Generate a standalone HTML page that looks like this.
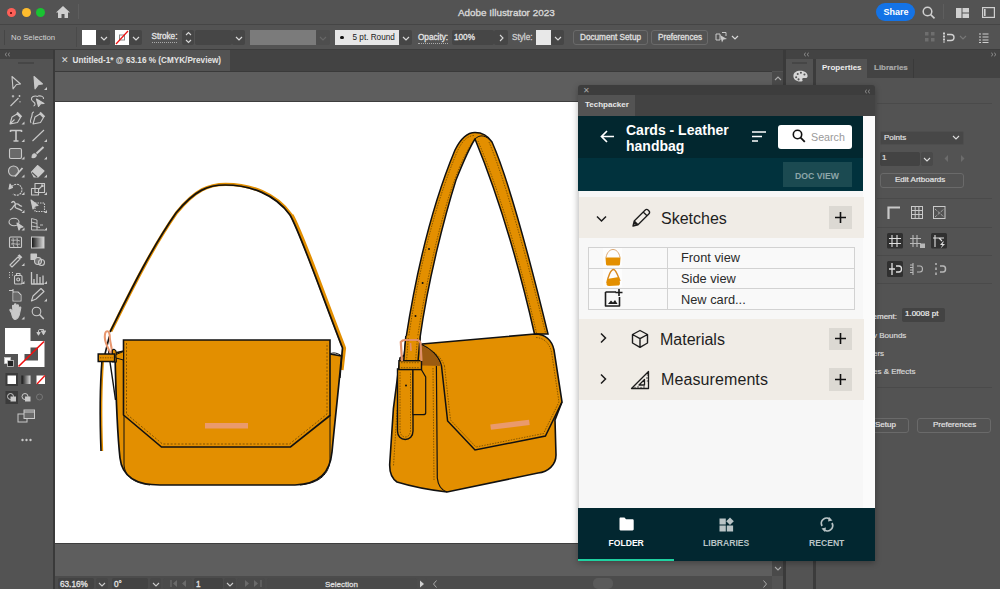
<!DOCTYPE html>
<html><head><meta charset="utf-8">
<style>
*{box-sizing:border-box;margin:0;padding:0}
html,body{width:1000px;height:589px;overflow:hidden}
body{background:#535353;position:relative;font-family:"Liberation Sans",sans-serif;color:#d6d6d6}
.a{position:absolute}
.t{position:absolute;white-space:nowrap;line-height:1}
.ui{-webkit-text-stroke:0.25px currentColor}
svg{position:absolute;overflow:visible}
.box{position:absolute;background:#464646;border-radius:2px}
.btn{position:absolute;border:1px solid #6a6a6a;border-radius:3px;background:#535353}
</style></head><body>

<!-- ===== TITLE BAR ===== -->
<div class="a" style="left:0;top:0;width:1000px;height:24px;background:#535353"></div>
<div class="a" style="left:0;top:24px;width:1000px;height:1px;background:#454545"></div>
<div class="a" style="left:6.5px;top:8px;width:9px;height:9px;border-radius:50%;background:#fe5f57"></div>
<div class="a" style="left:10px;top:11.5px;width:2px;height:2px;border-radius:50%;background:#4d0000"></div>
<div class="a" style="left:21.5px;top:8px;width:9px;height:9px;border-radius:50%;background:#febc2e"></div>
<div class="a" style="left:36px;top:8px;width:9px;height:9px;border-radius:50%;background:#19c332"></div>
<svg style="left:56px;top:6px" width="14" height="12" viewBox="0 0 14 12"><path d="M7 0 L14 6.5 L12 6.5 L12 12 L8.5 12 L8.5 8 L5.5 8 L5.5 12 L2 12 L2 6.5 L0 6.5 Z" fill="#cfcfcf"/></svg>
<div class="a" style="left:78px;top:4px;width:1px;height:15px;background:#5e5e5e"></div>
<div class="t" style="left:458px;top:8.3px;font-size:9.9px;color:#d8d8d8;-webkit-text-stroke:0.35px #d8d8d8">Adobe Illustrator 2023</div>
<div class="a" style="left:876px;top:3px;width:39px;height:18px;border-radius:9px;background:#1473e6"></div>
<div class="t" style="left:883.5px;top:7.5px;font-size:9px;font-weight:bold;color:#fff">Share</div>
<svg style="left:922px;top:6px" width="14" height="13" viewBox="0 0 14 13"><circle cx="5.5" cy="5.5" r="4.3" fill="none" stroke="#d0d0d0" stroke-width="1.5"/><path d="M8.7 8.7 L12.5 12.3" stroke="#d0d0d0" stroke-width="1.6"/></svg>
<div class="a" style="left:943px;top:4px;width:1px;height:15px;background:#5e5e5e"></div>
<svg style="left:956px;top:8px" width="13" height="10" viewBox="0 0 13 10"><rect x="0" y="0" width="5.5" height="10" fill="#d0d0d0"/><rect x="6.5" y="0" width="6.5" height="4.5" fill="#d0d0d0"/><rect x="6.5" y="5.5" width="6.5" height="4.5" fill="#d0d0d0"/></svg>
<svg style="left:982px;top:7px" width="13" height="11" viewBox="0 0 13 11"><rect x="0.6" y="0.6" width="11.8" height="9.8" fill="none" stroke="#d0d0d0" stroke-width="1.2"/><rect x="2" y="2" width="1.6" height="7" fill="#d0d0d0"/></svg>

<!-- ===== CONTROL BAR ===== -->
<div class="a" style="left:0;top:25px;width:1000px;height:24px;background:#535353"></div>
<div class="a" style="left:0;top:49px;width:1000px;height:1px;background:#3c3c3c"></div>
<div class="a" style="left:4px;top:30px;width:1px;height:15px;background:#464646"></div>
<div class="t" style="left:11px;top:34px;font-size:7.8px;color:#d4d4d4">No Selection</div>
<div class="a" style="left:76px;top:27px;width:1px;height:20px;background:#4a4a4a"></div>
<div class="a" style="left:82px;top:30px;width:14px;height:15px;background:#fff"></div>
<div class="box" style="left:96px;top:30px;width:14px;height:15px"></div>
<div class="a" style="left:115px;top:30px;width:14px;height:15px;background:#fff"></div>
<svg style="left:115px;top:30px" width="14" height="15"><rect x="4.5" y="5" width="5" height="5" fill="none" stroke="#888" stroke-width="1"/><path d="M1 14 L13 1" stroke="#e11" stroke-width="1.2"/></svg>
<div class="box" style="left:129px;top:30px;width:13px;height:15px"></div>
<div class="t" style="left:151.5px;top:33px;font-size:8.2px;color:#e4e4e4;-webkit-text-stroke:0.3px #e4e4e4;border-bottom:1px dotted #aaa;padding-bottom:1px">Stroke:</div>
<div class="box" style="left:182px;top:30px;width:12px;height:15px"></div>
<div class="box" style="left:195px;top:30px;width:37px;height:15px"></div>
<div class="box" style="left:232px;top:30px;width:13px;height:15px"></div>
<div class="a" style="left:250px;top:30px;width:66px;height:15px;background:#7b7b7b"></div>
<div class="box" style="left:316px;top:30px;width:14px;height:15px;background:#4e4e4e"></div>
<div class="a" style="left:335px;top:30px;width:64px;height:15px;background:#e6e6e6"></div>
<div class="a" style="left:339.8px;top:35.7px;width:3.8px;height:3.8px;border-radius:50%;background:#111"></div>
<div class="t" style="left:352.5px;top:34px;font-size:8.2px;color:#1a1a1a">5 pt. Round</div>
<div class="box" style="left:399px;top:30px;width:13px;height:15px"></div>
<div class="t" style="left:418px;top:34px;font-size:8.2px;color:#e4e4e4;-webkit-text-stroke:0.3px #e4e4e4;border-bottom:1px dotted #aaa;padding-bottom:1px">Opacity:</div>
<div class="box" style="left:452px;top:30px;width:42px;height:15px"></div>
<div class="t" style="left:454px;top:34px;font-size:8.2px;color:#e8e8e8;-webkit-text-stroke:0.28px #e8e8e8">100%</div>
<div class="box" style="left:494px;top:30px;width:14px;height:15px"></div>
<div class="t" style="left:512px;top:34px;font-size:8.2px;color:#d0d0d0;-webkit-text-stroke:0.28px #d0d0d0">Style:</div>
<div class="a" style="left:536px;top:30px;width:15px;height:15px;background:#e8e8e8"></div>
<div class="box" style="left:551px;top:30px;width:13px;height:15px"></div>
<div class="btn" style="left:573px;top:30px;width:75px;height:15px"></div>
<div class="t" style="left:580px;top:34px;font-size:8.2px;color:#e0e0e0;-webkit-text-stroke:0.28px #e0e0e0">Document Setup</div>
<div class="btn" style="left:651px;top:30px;width:57px;height:15px"></div>
<div class="t" style="left:658px;top:34px;font-size:8.2px;color:#e0e0e0;-webkit-text-stroke:0.28px #e0e0e0">Preferences</div>

<svg style="left:99.5px;top:36px" width="8" height="5"><path d="M1 1 L4 4 L7 1" fill="none" stroke="#d8d8d8" stroke-width="1.2"/></svg><svg style="left:132px;top:36px" width="8" height="5"><path d="M1 1 L4 4 L7 1" fill="none" stroke="#d8d8d8" stroke-width="1.2"/></svg><svg style="left:234.5px;top:36px" width="8" height="5"><path d="M1 1 L4 4 L7 1" fill="none" stroke="#d8d8d8" stroke-width="1.2"/></svg><svg style="left:319px;top:36px" width="8" height="5"><path d="M1 1 L4 4 L7 1" fill="none" stroke="#666" stroke-width="1.2"/></svg><svg style="left:402px;top:36px" width="8" height="5"><path d="M1 1 L4 4 L7 1" fill="none" stroke="#d8d8d8" stroke-width="1.2"/></svg><svg style="left:553.5px;top:36px" width="8" height="5"><path d="M1 1 L4 4 L7 1" fill="none" stroke="#d8d8d8" stroke-width="1.2"/></svg><svg style="left:185px;top:31px" width="7" height="13"><path d="M1 4 L3.5 1.5 L6 4 M1 9 L3.5 11.5 L6 9" fill="none" stroke="#d8d8d8" stroke-width="1.1"/></svg><svg style="left:499px;top:34px" width="5" height="8"><path d="M1 1 L4 4 L1 7" fill="none" stroke="#d8d8d8" stroke-width="1.1"/></svg><svg style="left:715px;top:31px" width="14" height="12" viewBox="0 0 14 12"><path d="M1 3 L5 3 L5 9 L1 9 Z M7 1.5 L11 1.5 L11 5" fill="none" stroke="#c9c9c9" stroke-width="1"/><path d="M5 4 L12 8 L8.5 8.5 L7 11.5 Z" fill="#c9c9c9"/></svg><svg style="left:731px;top:35px" width="8" height="5"><path d="M1 1 L4 4 L7 1" fill="none" stroke="#d8d8d8" stroke-width="1.2"/></svg><svg style="left:925px;top:32px" width="10" height="10"><g fill="#6e6e6e"><rect x="0" y="0" width="3.5" height="3.5"/><rect x="6" y="0" width="3.5" height="3.5"/><rect x="0" y="6" width="3.5" height="3.5"/><rect x="6" y="6" width="3.5" height="3.5"/></g></svg><svg style="left:943px;top:32px" width="12" height="11"><path d="M1 0.5 L1 10.5" stroke="#d0d0d0" stroke-width="2" stroke-dasharray="2 1"/><path d="M4 2.5 L8 2.5 C 10 2.5, 11 4, 11 5.5 C 11 7, 10 8.5, 8 8.5 L4 8.5" fill="none" stroke="#d0d0d0" stroke-width="1.4"/></svg><svg style="left:959px;top:35px" width="8" height="5"><path d="M1 1 L4 4 L7 1" fill="none" stroke="#777" stroke-width="1.2"/></svg><svg style="left:979px;top:32.5px" width="10" height="10"><path d="M0 1 L2 1 M0 4 L2 4 M0 7 L2 7 M0 9.5 L2 9.5 M3.5 1 L9.5 1 M3.5 4 L9.5 4 M3.5 7 L9.5 7 M3.5 9.5 L9.5 9.5" stroke="#d0d0d0" stroke-width="1.2"/></svg>
<!-- ===== LEFT TOOLBAR ===== -->
<div class="a" style="left:0;top:50px;width:53px;height:539px;background:#535353"></div>
<div class="a" style="left:0;top:50px;width:53px;height:9px;background:#434343"></div>
<div class="a" style="left:53px;top:50px;width:2px;height:539px;background:#3a3a3a"></div>

<!-- toolbar icons -->
<div class="a" style="left:18px;top:62px;width:16px;height:2px;background:#464646"></div>
<svg style="left:0;top:0" width="53" height="450" viewBox="0 0 53 450">
<g fill="none" stroke="#c9c9c9" stroke-width="1.1" stroke-linejoin="round">
<!-- r1 selection -->
<path d="M12 76.5 L20.5 84 L16.5 84.5 L13 88.8 Z"/>
<path d="M34 76.5 L42.5 84 L38.5 84.5 L35 88.8 Z" fill="#c9c9c9"/>
<!-- r2 wand / lasso -->
<path d="M10.5 106 L18.5 98"/>
<path d="M13 95 L13 97.5 M11.8 96.2 L14.2 96.2 M19.5 95 L19.5 97 M18.5 96 L20.5 96 M20 101 L20 102.5" stroke-width="0.9"/>
<path d="M38 96.5 C 34 95, 31 97, 31.5 99.5 C 32 102, 35 101.5, 35 104 C 35 105, 34 106, 33.5 106 M 38 96 C 41 95.5, 44 96.5, 43.5 99"/>
<path d="M36.5 99 L44 103.5 L40.5 103.8 L38.5 106.5 Z" fill="#c9c9c9"/>
<!-- r3 pen / curvature -->
<path d="M10 124 L12 117 L17 114 L20.5 117.5 L17.5 122.5 Z M10 124 L14.5 119.5" fill="none"/>
<path d="M17 112.5 L21.5 117" stroke-width="2"/>
<path d="M33 124 L35 117 L40 114 L43.5 117.5 L40.5 122.5 Z" />
<path d="M40 112.5 L44.5 117" stroke-width="2"/>
<path d="M31 123 C 29 120, 32 118, 32 115 C 32 113, 33 112, 34 112"/>
<!-- r4 type / line -->
<path d="M10.5 132 L10.5 130.5 L21.5 130.5 L21.5 132 M16 130.5 L16 141 M13.5 141 L18.5 141" stroke-width="1.6"/>
<path d="M32.5 141 L44 130"/>
<!-- r5 rect / brush -->
<rect x="9.5" y="148.5" width="12" height="10" rx="1.5" fill="#6a6a6a"/>
<path d="M32 157.5 C 32 154, 34 153, 36 154.5 C 37 156, 35 158, 32 157.5 Z" fill="#c9c9c9"/>
<path d="M36.5 153.5 L43.5 147" stroke-width="2"/>
<!-- r6 shaper / eraser -->
<circle cx="13.5" cy="171" r="5" fill="#6a6a6a"/>
<path d="M15 176.5 L22.5 168" stroke-width="1.8"/>
<path d="M31.5 172 L37.5 165.5 L44 171 L38 177 L34 177 Z" fill="#c9c9c9"/>
<path d="M32 172.5 L37 177" stroke="#535353"/>
<!-- r7 rotate / scale -->
<path d="M12 186.5 A 5.5 5.5 0 1 1 13 194" stroke-dasharray="2 0.8"/>
<path d="M10 184 L12.5 187.5 L9 189 Z" fill="#c9c9c9"/>
<rect x="31.5" y="188.5" width="7" height="6.5"/>
<rect x="35" y="183.5" width="9.5" height="9"/>
<path d="M39 189 L43 185 M41 185 L43 185 L43 187"/>
<!-- r8 warp / free transform -->
<path d="M10 210 C 14 208, 13 205, 16 204 C 19 203, 20 207, 22 206 M 11.5 203 C 12.5 201, 14 201, 15 203 C 16 205, 14 207, 16 208 C 18 209, 21 209, 22 211" stroke-width="1.3"/>
<path d="M31 200 L38 205.5 L35 206 L33 209 Z" fill="#c9c9c9"/>
<rect x="35" y="203" width="9.5" height="8.5" stroke-dasharray="1.5 1"/>
<!-- r9 shape builder / perspective -->
<ellipse cx="14" cy="222" rx="5" ry="3.8"/>
<path d="M17 223 L23 227 L20.5 227.5 L19 230 Z" fill="#c9c9c9"/>
<path d="M31.5 218.5 L31.5 230 L44.5 230 M31.5 218.5 L37 220 L37 230 M31.5 222 L37 223.5 M31.5 226 L40 227.5 M40 225 L43 225" stroke-width="0.9"/>
<!-- r10 mesh / gradient -->
<rect x="9.5" y="237" width="12" height="10.5" rx="1"/>
<path d="M11 240 C 14 241, 16 239, 20 241 M 11 244 C 14 243, 17 245, 20 244 M 13 238 C 14 241, 12 244, 14 247 M 17 238 C 18 241, 16 244, 18 247" stroke-width="0.8"/>
</g>
<defs><linearGradient id="gr" x1="0" x2="1"><stop offset="0" stop-color="#111"/><stop offset="1" stop-color="#ddd"/></linearGradient></defs>
<rect x="31.5" y="237" width="12.5" height="11" fill="url(#gr)" stroke="#c9c9c9" stroke-width="1"/>
<g fill="none" stroke="#c9c9c9" stroke-width="1.1" stroke-linejoin="round">
<!-- r11 eyedropper / blend -->
<path d="M10 265 L18 257 L20 259 L12 267 Z"/>
<path d="M18.5 255 L21.5 258" stroke-width="2.4"/>
<rect x="31" y="254" width="5.5" height="5.5" fill="#c9c9c9"/>
<circle cx="38" cy="261" r="3.5" fill="#777"/>
<circle cx="41.5" cy="262.5" r="3"/>
<!-- r12 symbol / graph -->
<path d="M9 272.5 L10 272.5 M12 272.5 L13 272.5 M9 275 L10 275 M12 275 L13 275 M9 277.5 L10 277.5" stroke-width="1.2"/>
<rect x="14.5" y="275.5" width="7.5" height="8.5" rx="1"/>
<path d="M16.5 275.5 L16.5 273.5 L20 273.5 L20 275.5"/>
<circle cx="18.2" cy="279.5" r="1.5"/>
<path d="M31.5 272 L31.5 284 L44 284 M34 284 L34 279 M37 284 L37 274 M40 284 L40 277 M43 284 L43 275.5" stroke-width="1.3"/>
<!-- r13 artboard / pencil -->
<path d="M9 290.5 L13 290.5 L13 289 M13 290.5 L13 301 L21 301 L21 295 L18 292 L13 292" />
<path d="M13.5 293 L18 293 L20.5 295.5 L20.5 300.5 L13.5 300.5 Z" fill="#6a6a6a" stroke="none"/>
<path d="M31.5 301 L33 296 L41 288.5 L44 291.5 L36 299 Z"/>
<!-- r14 hand / zoom -->
<path d="M11.5 313 L10 310.5 C 9.5 309.5, 10.5 309, 11 309.5 L13 312 L12.5 306 C 12.5 305, 13.8 305, 13.8 306 L14.3 310 L14.5 304.5 C 14.5 303.5, 16 303.5, 16 304.5 L16.2 310 L17 305.5 C 17 304.5, 18.4 304.5, 18.4 305.5 L18.3 310.5 L19.5 307.5 C 19.8 306.5, 21 307, 20.8 308 L19.5 314 C 19 317, 17 319.5, 15 319.5 C 13 319.5, 12 316, 11.5 313 Z" fill="#c9c9c9"/>
<circle cx="36.5" cy="311.5" r="4.3"/>
<path d="M39.5 314.5 L43.8 319" stroke-width="1.5"/>
<!-- swap + stroke/fill boxes -->
<path d="M38.5 334.5 L38.5 331 C 38.5 330, 39 329.5, 40 329.5 L43.5 329.5 L43.5 333" stroke-width="1"/>
<path d="M37 332.5 L38.5 335 L40 332.5 Z M 41.5 331 L43.5 334.5 L45.5 331 Z" fill="#c9c9c9"/>
<path d="M4 370 L4 372" stroke="none"/>
</g>
<g fill="#c9c9c9">
<path d="M24.5 124.5 L24.5 121.5 L21.5 124.5 Z"/><path d="M47 90 L47 87 L44 90 Z"/>
<path d="M24.5 142 L24.5 139 L21.5 142 Z"/><path d="M47 142 L47 139 L44 142 Z"/>
<path d="M24.5 159.5 L24.5 156.5 L21.5 159.5 Z"/><path d="M47 159.5 L47 156.5 L44 159.5 Z"/>
<path d="M24.5 177.5 L24.5 174.5 L21.5 177.5 Z"/><path d="M47 177.5 L47 174.5 L44 177.5 Z"/>
<path d="M24.5 195 L24.5 192 L21.5 195 Z"/><path d="M47 195 L47 192 L44 195 Z"/>
<path d="M24.5 213 L24.5 210 L21.5 213 Z"/><path d="M47 213 L47 210 L44 213 Z"/>
<path d="M24.5 230.5 L24.5 227.5 L21.5 230.5 Z"/><path d="M47 230.5 L47 227.5 L44 230.5 Z"/>
<path d="M24.5 266 L24.5 263 L21.5 266 Z"/>
<path d="M24.5 284 L24.5 281 L21.5 284 Z"/><path d="M47 284 L47 281 L44 284 Z"/>
<path d="M47 301.5 L47 298.5 L44 301.5 Z"/>
<path d="M24.5 319.5 L24.5 316.5 L21.5 319.5 Z"/>
</g>
<!-- stroke box -->
<rect x="18" y="341" width="26.5" height="26" fill="#fff"/>
<rect x="24.5" y="347.5" width="13.5" height="13" fill="#535353"/>
<path d="M18.5 366.5 L44 341.5" stroke="#f01010" stroke-width="1.6"/>
<rect x="5" y="328" width="25.5" height="26" fill="#fff"/>
<!-- default icon -->
<rect x="4.5" y="357.5" width="6" height="6" fill="#fff" stroke="#c9c9c9" stroke-width="0.8"/>
<rect x="7.5" y="360.5" width="6" height="6" fill="#222" stroke="#c9c9c9" stroke-width="0.8"/>
<!-- color mode row -->
<rect x="5.5" y="373" width="12.5" height="13" fill="#3b3b3b"/>
<rect x="7.5" y="375.5" width="8.5" height="8.5" fill="#fff"/>
<rect x="21.5" y="375.5" width="9" height="8.5" fill="url(#gr)"/>
<rect x="36.5" y="375.5" width="8.5" height="8.5" fill="#fff"/>
<path d="M37 384 L45 375.5" stroke="#f01010" stroke-width="1.3"/>
<!-- drawing modes -->
<rect x="5.5" y="391" width="12.5" height="13" fill="#3b3b3b"/>
<g fill="none" stroke="#c9c9c9" stroke-width="1">
<circle cx="10.5" cy="396.5" r="3"/><rect x="11" y="397" width="4.5" height="4" fill="#c9c9c9"/>
<circle cx="25" cy="396.5" r="3"/><rect x="25.5" y="397" width="4.5" height="4" fill="#c9c9c9"/>
<circle cx="39.5" cy="397" r="3" stroke="#777"/>
</g>
<!-- screen mode -->
<g fill="none" stroke="#c9c9c9" stroke-width="1">
<rect x="18" y="414" width="9" height="8"/>
<rect x="24" y="410" width="10.5" height="8.5" fill="#6a6a6a"/>
<path d="M24 412 L34.5 412"/>
</g>
<circle cx="22.5" cy="440" r="1.2" fill="#c9c9c9"/><circle cx="26.5" cy="440" r="1.2" fill="#c9c9c9"/><circle cx="30.5" cy="440" r="1.2" fill="#c9c9c9"/>

</svg>

<!-- ===== DOC AREA ===== -->
<div class="a" style="left:55px;top:50px;width:731px;height:21px;background:#434343"></div>
<div class="a" style="left:55px;top:50px;width:175px;height:21px;background:#535353"></div>
<div class="t" style="left:61px;top:56px;font-size:9px;color:#ddd">&#x2715;</div>
<div class="t" style="left:72.5px;top:56.5px;font-size:8.2px;font-weight:bold;color:#e4e4e4">Untitled-1* @ 63.16 % (CMYK/Preview)</div>
<div class="a" style="left:55px;top:71px;width:717px;height:1px;background:#3a3a3a"></div>
<div class="a" style="left:55px;top:72px;width:717px;height:504px;background:#5e5e5e"></div>
<div class="a" style="left:55px;top:101px;width:523px;height:1px;background:#3e3e3e"></div>
<div class="a" style="left:55px;top:102px;width:523px;height:441px;background:#fff"></div>
<div class="a" style="left:55px;top:543px;width:523px;height:1px;background:#3e3e3e"></div>
<!-- right scroll bar -->
<div class="a" style="left:772px;top:72px;width:11px;height:504px;background:#535353"></div>
<div class="a" style="left:783px;top:50px;width:3px;height:539px;background:#3a3a3a"></div>
<!-- status bar -->
<div class="a" style="left:55px;top:576px;width:717px;height:13px;background:#4c4c4c"></div>
<div class="box" style="left:58px;top:578px;width:36px;height:11px;background:#434343"></div>
<div class="t" style="left:60px;top:580.5px;font-size:8.2px;color:#e4e4e4;-webkit-text-stroke:0.3px #e4e4e4">63.16%</div>
<div class="box" style="left:96px;top:578px;width:12px;height:11px;background:#474747"></div>
<svg style="left:98px;top:582px" width="8" height="5"><path d="M1 1 L4 4 L7 1" fill="none" stroke="#ccc" stroke-width="1.1"/></svg>
<div class="box" style="left:112px;top:578px;width:36px;height:11px;background:#434343"></div>
<div class="t" style="left:114px;top:580.5px;font-size:8.2px;color:#e4e4e4;-webkit-text-stroke:0.3px #e4e4e4">0°</div>
<div class="box" style="left:150px;top:578px;width:11px;height:11px;background:#474747"></div>
<svg style="left:152px;top:582px" width="8" height="5"><path d="M1 1 L4 4 L7 1" fill="none" stroke="#ccc" stroke-width="1.1"/></svg>
<div class="box" style="left:163px;top:578px;width:29px;height:11px;background:#4a4a4a"></div>
<svg style="left:170px;top:579px" width="20" height="9"><path d="M1 1 L1 8" stroke="#6a6a6a" stroke-width="1.3"/><path d="M7 1 L3 4.5 L7 8 Z M16 1 L12 4.5 L16 8 Z" fill="#6a6a6a"/></svg>
<div class="box" style="left:193.5px;top:578px;width:29px;height:11px;background:#434343"></div>
<div class="t" style="left:196px;top:580.5px;font-size:8.2px;color:#e4e4e4;-webkit-text-stroke:0.3px #e4e4e4">1</div>
<div class="box" style="left:224px;top:578px;width:12px;height:11px;background:#474747"></div>
<svg style="left:226px;top:582px" width="8" height="5"><path d="M1 1 L4 4 L7 1" fill="none" stroke="#ccc" stroke-width="1.1"/></svg>
<div class="box" style="left:237px;top:578px;width:28px;height:11px;background:#4a4a4a"></div>
<svg style="left:243px;top:579px" width="20" height="9"><path d="M2 1 L6 4.5 L2 8 Z" fill="#6a6a6a"/><path d="M18 1 L18 8" stroke="#6a6a6a" stroke-width="1.3"/><path d="M11 1 L15 4.5 L11 8 Z" fill="#6a6a6a"/></svg>
<div class="box" style="left:267px;top:578px;width:150px;height:11px;background:#4a4a4a"></div>
<div class="t" style="left:325px;top:580.5px;font-size:8px;color:#dcdcdc;-webkit-text-stroke:0.3px #dcdcdc">Selection</div>
<div class="box" style="left:417px;top:578px;width:10px;height:11px;background:#4c4c4c"></div>
<svg style="left:419px;top:580px" width="6" height="8"><path d="M1 0.5 L5 4 L1 7.5 Z" fill="#d0d0d0"/></svg>
<svg style="left:432px;top:580px" width="6" height="8"><path d="M4.5 0.5 L1.5 4 L4.5 7.5" fill="none" stroke="#aaa" stroke-width="1"/></svg>
<div class="a" style="left:592.5px;top:578px;width:20px;height:11px;border-radius:5px;background:#5a5a5a"></div>
<svg style="left:762px;top:580px" width="6" height="8"><path d="M1.5 0.5 L4.5 4 L1.5 7.5" fill="none" stroke="#aaa" stroke-width="1"/></svg>
<div class="a" style="left:772px;top:561px;width:11px;height:15px;background:#4a4a4a"></div>
<svg style="left:774px;top:566px" width="8" height="5"><path d="M1 1 L4 4 L7 1" fill="none" stroke="#aaa" stroke-width="1.1"/></svg>
<div class="a" style="left:772px;top:576px;width:11px;height:13px;background:#535353"></div>
<div class="a" style="left:772px;top:72px;width:11px;height:13px;background:#4a4a4a"></div>
<svg style="left:774px;top:76px" width="8" height="5"><path d="M1 4 L4 1 L7 4" fill="none" stroke="#aaa" stroke-width="1.1"/></svg>

<!-- ===== BAGS ===== -->
<svg style="left:0;top:0" width="1000" height="589" viewBox="0 0 1000 589">
<defs>
<clipPath id="ab"><rect x="55" y="102" width="523" height="441"/></clipPath>
</defs>
<g clip-path="url(#ab)">
<!-- FRONT BAG strap -->
<path d="M110 332 C 126 300, 150 250, 176 213 C 195 190, 208 185, 225 185 C 250 185, 275 194, 290 215 C 300 232, 320 290, 342 347" fill="none" stroke="#e38f00" stroke-width="3.2" transform="translate(0.8,-0.6)"/>
<path d="M290 215 C 300 232, 320 290, 342.5 348 L 340 370" fill="none" stroke="#e38f00" stroke-width="3.4" stroke-linejoin="round" transform="translate(1.9,0)"/>
<path d="M110 332 C 126 300, 150 250, 176 213 C 195 190, 208 185, 225 185 C 250 185, 275 194, 290 215 C 300 232, 320 290, 342.5 348 L 339.8 378" fill="none" stroke="#111" stroke-width="1.7" stroke-linejoin="round"/>
<!-- hanging strap end -->
<path d="M102 360 C 100 385, 99.8 420, 101 451" fill="none" stroke="#e38f00" stroke-width="2" transform="translate(1.2,0)"/>
<path d="M109.3 336.5 L104 358 L102 360 C 100 385, 99.8 420, 101 451" fill="none" stroke="#111" stroke-width="1.6"/>
<path d="M108.5 350 L110 362 C 111.5 372, 113.5 385, 115.5 400" fill="none" stroke="#111" stroke-width="1.4"/>
<!-- body -->
<path d="M124 351 L115 353 C 116 400, 118 440, 120 458 C 122 476, 135 485, 160 485 L 295 485 C 320 484, 330 472, 332 452 C 335 420, 338.5 390, 341.5 356 L 330 354 Z" fill="#e38f00" stroke="#111" stroke-width="1.7"/>
<path d="M124 415 L124 465 C 125 476, 133 483, 150 485" fill="none" stroke="#111" stroke-width="1"/>
<path d="M330 415 L330 460 C 329 474, 320 483, 300 485" fill="none" stroke="#111" stroke-width="1"/>
<path d="M330 354 C 333 352, 338 353, 341.5 356" fill="none" stroke="#111" stroke-width="1"/>
<!-- flap -->
<path d="M123.5 340 L330 340 L330 415.5 L290.5 447 L161.5 447 L123.5 415 Z" fill="#e38f00" stroke="#111" stroke-width="1.6"/>
<path d="M126.5 343 L126.5 414 L162.5 444 L289.5 444 L327 414 L327 343" fill="none" stroke="#5a3a00" stroke-width="0.7" stroke-dasharray="2 1.6"/>
<rect x="205" y="423" width="43" height="5.5" fill="#ea9a6c"/>
<!-- ring + tab -->
<path d="M110.5 353 C 108 348, 104.8 343, 104.8 337 C 104.8 333, 106 331.2, 107.2 331.2 C 108.8 331.2, 109.8 334, 109.8 338 C 110.3 343, 111.8 348, 112.3 353" fill="none" stroke="#e8976f" stroke-width="2.1"/>
<path d="M112.3 362 L112.3 351.5 C 112.3 349.5, 113.5 349, 114.5 349.5 C 116 350, 116.3 351, 116.3 353 L116.3 362 Z" fill="#e38f00" stroke="#111" stroke-width="1.2"/>
<path d="M116 354.5 L123.5 351.5 L123.5 360 L116 358 Z" fill="#e38f00" stroke="#111" stroke-width="1"/>
<path d="M98.2 354 L114.6 354 L114.6 361.6 L98.2 361.6 Z" fill="#e38f00" stroke="#111" stroke-width="1.5"/>
<path d="M100 357.8 L113 357.8" stroke="#5a3a00" stroke-width="0.7" stroke-dasharray="1.3 1.2"/>

<!-- SIDE BAG strap -->
<path d="M403.7 361 L406 338 C 415 280, 430 210, 455 150 C 461 138, 467 132.5, 475 132.5 C 482 132.5, 488 136, 492 142 C 508 178, 530 260, 548 334 L 534.5 334 C 520 270, 500 200, 475 139 C 468 150, 462 165, 456 180 C 445 215, 428 280, 420 338 L418 361 Z" fill="#e38f00" stroke="#111" stroke-width="1.5"/>
<path d="M475 139 C 480 134, 486 135, 492 142" fill="none" stroke="#111" stroke-width="1"/>
<path d="M408.5 338 C 417 280, 432 212, 457 152 C 462 141, 467 136, 474 135.5 M536.5 333 C 522 270, 503 200, 478 141 M 489 142 C 505 180, 528 262, 545.5 333 M417.5 338 C 426 280, 442 214, 454.5 180 C 460 165, 466 152, 472 143" fill="none" stroke="#4a3000" stroke-width="0.6" stroke-dasharray="1.5 1.2"/>
<!-- body -->
<path d="M400 358 L422 344 L535 334 C 545 334, 552 340, 554 350 L562 402 L555 420 L556 455 C 556 465, 548 472, 538 473 L447 492 C 430 490, 410 486, 397 482 C 391 478, 389.5 470, 389.7 464 L393.4 408.7 Z" fill="#e38f00" stroke="#111" stroke-width="1.6"/>
<path d="M436.4 366 L437.3 478 C 438 485, 441 490, 447 492" fill="none" stroke="#111" stroke-width="1.2"/>
<path d="M433 368 L434 480 M 397 410 L393.5 466" fill="none" stroke="#4a3000" stroke-width="0.6" stroke-dasharray="1.5 1.2"/>
<path d="M421.5 344.6 C 430 348, 439 356, 441.5 366 L447.6 421 L475 450 L545.4 436 L562 402" fill="none" stroke="#111" stroke-width="1.5"/>
<path d="M444.5 366 L450.5 420 L476 447 L543.5 433.5 L559 402 L551.5 352 C 549 342, 543 337.5, 535 337.5 M 427 348 C 435 352, 442 358, 444.5 366" fill="none" stroke="#4a3000" stroke-width="0.6" stroke-dasharray="1.5 1.2"/>
<path d="M556 423 L557.5 455 C 557 463, 550 469, 540 471 M 555 422 C 553 440, 553 455, 552 458" fill="none" stroke="none"/>
<path d="M421.5 345 C 430 349, 438 356, 441 366 L 421.5 365.4 Z" fill="#9b5b10"/>
<rect x="490.5" y="422" width="39" height="5.5" fill="#ea9a6c" transform="rotate(-7 510 424.5)"/>
<path d="M405.8 336 L403.7 361.5 L418 361.5 L420.2 336 Z" fill="#e38f00"/>
<path d="M405.8 336 L403.7 361.5 M418 361.5 L420.2 336" fill="none" stroke="#111" stroke-width="1.5"/>
<path d="M408.3 338 L406.5 361 M415.5 361 L417.5 338" fill="none" stroke="#4a3000" stroke-width="0.6" stroke-dasharray="1.5 1.2"/>
<!-- side strap end / keeper -->
<path d="M397.5 369 L413 369 L413 431 C 413 436.5, 409.5 439.5, 405.2 439.5 C 401 439.5, 397.5 436.5, 397.5 431 Z" fill="#e38f00" stroke="#111" stroke-width="1.4"/>
<path d="M400 372 L400 430 C 400 434, 402 437, 405.2 437 C 408.5 437, 410.5 434, 410.5 430 L410.5 372" fill="none" stroke="#4a3000" stroke-width="0.6" stroke-dasharray="1.5 1.2"/>
<path d="M413 369 L421 369 L425.7 377 L425.7 413 C 425.7 414.5, 424.5 414.7, 423 414.7 L413 414.7 Z" fill="#e38f00" stroke="#111" stroke-width="1.2"/>
<rect x="399" y="360.7" width="22.5" height="8.9" fill="#e38f00" stroke="#111" stroke-width="1.4"/>
<path d="M401 362.7 L419.5 362.7 M401 367.7 L419.5 367.7" fill="none" stroke="#4a3000" stroke-width="0.6" stroke-dasharray="1.5 1.2"/>
<path d="M402 361 L400.8 342 C 402 340.5, 403 340, 405 340 L417 340 C 419 340, 420 341, 420.5 343 L421.5 361" fill="none" stroke="#e0906a" stroke-width="2.2"/>
<path d="M410.5 343 L411 351" stroke="#e0906a" stroke-width="1.6"/>
<circle cx="429" cy="249" r="1" fill="#111"/>
<circle cx="422.6" cy="283" r="1" fill="#111"/>
<circle cx="415.5" cy="316" r="1" fill="#111"/>
<circle cx="406" cy="385.6" r="1" fill="#111"/>
</g>
</svg>

<!-- ===== RIGHT PANEL ===== -->
<div class="a" style="left:786px;top:50px;width:214px;height:9px;background:#434343"></div>
<div class="a" style="left:786px;top:59px;width:214px;height:530px;background:#434343"></div>
<div class="a" style="left:786px;top:59px;width:27px;height:530px;background:#535353"></div>
<div class="a" style="left:813px;top:59px;width:3px;height:530px;background:#3c3c3c"></div>
<div class="a" style="left:792px;top:62px;width:15px;height:2px;background:#464646"></div>
<svg style="left:792.5px;top:70px" width="15" height="12" viewBox="0 0 19 15"><path d="M9.5 1 C 15 1, 18.5 4, 18.5 7.5 C 18.5 10, 16 10.5, 14 10 C 12 9.5, 11 11, 12 12.5 C 13 14, 11 14.5, 9 14.5 C 4 14.5, 0.5 11.5, 0.5 7.5 C 0.5 3.5, 4 1, 9.5 1 Z" fill="#d6d6d6"/><circle cx="4" cy="9" r="1.3" fill="#535353"/><circle cx="7" cy="11.8" r="1.3" fill="#535353"/><circle cx="6" cy="5" r="1.3" fill="#535353"/><circle cx="10" cy="3.5" r="1.3" fill="#535353"/><circle cx="14.5" cy="5.5" r="1.3" fill="#535353"/></svg>
<div class="a" style="left:816px;top:59px;width:51px;height:19px;background:#535353"></div>
<div class="t" style="left:822px;top:64px;font-size:8px;font-weight:bold;color:#eee">Properties</div>
<div class="t" style="left:874px;top:64px;font-size:8px;font-weight:bold;color:#a8a8a8;-webkit-text-stroke:0.2px #a8a8a8">Libraries</div>
<div class="a" style="left:913px;top:59px;width:1px;height:19px;background:#3a3a3a"></div>
<div class="a" style="left:816px;top:78px;width:184px;height:511px;background:#535353"></div>
<div class="a" style="left:877px;top:103px;width:115px;height:1px;background:#4a4a4a"></div>
<div class="box" style="left:879.5px;top:130.5px;width:84px;height:14px;background:#474747;border:1px solid #4e4e4e"></div>
<div class="t" style="left:884px;top:133.5px;font-size:8px;color:#e0e0e0;-webkit-text-stroke:0.2px #e0e0e0">Points</div>
<svg style="left:952px;top:135px" width="8" height="5"><path d="M1 1 L4 4 L7 1" fill="none" stroke="#ddd" stroke-width="1.1"/></svg>
<div class="box" style="left:879.5px;top:151.5px;width:40px;height:14px;background:#434343"></div>
<div class="t" style="left:882px;top:154px;font-size:8px;color:#e0e0e0;-webkit-text-stroke:0.2px #e0e0e0">1</div>
<div class="box" style="left:920.5px;top:151.5px;width:12.5px;height:14px;background:#4a4a4a"></div>
<svg style="left:923px;top:157px" width="8" height="5"><path d="M1 1 L4 4 L7 1" fill="none" stroke="#ddd" stroke-width="1.1"/></svg>
<svg style="left:943px;top:154px" width="24" height="9"><path d="M5 1 L1.5 4.5 L5 8 Z M18 1 L21.5 4.5 L18 8 Z" fill="#6c6c6c"/></svg>
<div class="btn" style="left:879.5px;top:172.5px;width:84.5px;height:15px;border-color:#6a6a6a"></div>
<div class="t" style="left:895px;top:176px;font-size:8px;color:#e4e4e4;-webkit-text-stroke:0.2px #e4e4e4">Edit Artboards</div>
<div class="a" style="left:877px;top:198px;width:115px;height:1px;background:#4a4a4a"></div>
<svg style="left:886px;top:205px" width="62" height="76" viewBox="0 0 62 76">
<g fill="none" stroke="#c9c9c9" stroke-width="1">
<path d="M2.5 14 L2.5 2.5 L14 2.5" stroke-width="2.2"/>
<rect x="25.5" y="1.5" width="11" height="12"/><path d="M25.5 5.5 L36.5 5.5 M25.5 9.5 L36.5 9.5 M29.2 1.5 L29.2 13.5 M32.9 1.5 L32.9 13.5"/>
<rect x="47.5" y="1.5" width="11.5" height="12"/><path d="M49 4 L58 12 M49 12 L58 4" stroke-dasharray="1 1"/>
</g>
<rect x="1" y="28" width="16" height="15.5" rx="1.5" fill="#303030"/>
<rect x="45" y="28" width="16" height="15.5" rx="1.5" fill="#303030"/>
<rect x="1" y="56" width="16" height="16" rx="1.5" fill="#303030"/>
<g fill="none" stroke="#e0e0e0" stroke-width="1.1">
<path d="M6 30 L6 42 M11 30 L11 42 M3 33.5 L15 33.5 M3 38.5 L15 38.5"/>
<path d="M27 30 L27 42 M31 30 L31 42 M24 33.5 L35 33.5 M24 38.5 L35 38.5" stroke="#b8b8b8"/>
<path d="M49 30 L49 42 M47 33 L58 33 M53 33 L56 36" />
<path d="M6 58 L6 70 M3 64 L9 64 M10 61 L13 61 C 15 61, 15.5 63, 15.5 64 C 15.5 65, 15 67, 13 67 L10 67" stroke-width="1.3"/>
<path d="M27 58 L27 70 M24 60 L27 60 M24 62.5 L27 62.5 M24 65 L27 65 M24 67.5 L27 67.5 M31 61 L34 61 C 36 61, 36.5 63, 36.5 64 C 36.5 65, 36 67, 34 67 L31 67" stroke="#b8b8b8"/>
<path d="M50 58 L50 60 M50 62.5 L50 65 M50 67.5 L50 70 M54 61 L57 61 C 59 61, 59.5 63, 59.5 64 C 59.5 65, 59 67, 57 67 L54 67" stroke="#b8b8b8" stroke-width="1.5"/>
</g>
<rect x="34" y="38.5" width="5" height="4.5" fill="#b8b8b8"/>
<path d="M57 36.5 L54 40 L56.5 40 L54.5 43.5 L59 39 L56.5 39 L58 36.5 Z" fill="#e0e0e0"/>
</svg>
<div class="a" style="left:877px;top:226.5px;width:115px;height:1px;background:#4a4a4a"></div>
<div class="a" style="left:877px;top:255px;width:115px;height:1px;background:#4a4a4a"></div>
<div class="a" style="left:877px;top:283px;width:115px;height:1px;background:#4a4a4a"></div>
<div class="t" style="right:103px;top:313px;font-size:8px;color:#e0e0e0;-webkit-text-stroke:0.2px #e0e0e0">ement:</div>
<div class="box" style="left:902px;top:307.5px;width:43px;height:14.5px;background:#434343"></div>
<div class="t" style="left:905px;top:310px;font-size:8px;color:#f0f0f0;-webkit-text-stroke:0.2px #f0f0f0">1.0008 pt</div>
<div class="t" style="left:873px;top:332px;font-size:8px;color:#d8d8d8;-webkit-text-stroke:0.2px #d8d8d8">v Bounds</div>
<div class="t" style="left:873px;top:350px;font-size:8px;color:#d8d8d8;-webkit-text-stroke:0.2px #d8d8d8">ers</div>
<div class="t" style="left:873px;top:367.5px;font-size:8px;color:#d8d8d8;-webkit-text-stroke:0.2px #d8d8d8">es &amp; Effects</div>
<div class="a" style="left:877px;top:387px;width:115px;height:1px;background:#4a4a4a"></div>
<div class="btn" style="left:860px;top:417.5px;width:49px;height:15px;border-color:#6a6a6a"></div>
<div class="t" style="left:875px;top:421px;font-size:8px;color:#e4e4e4;-webkit-text-stroke:0.2px #e4e4e4">Setup</div>
<div class="btn" style="left:916.5px;top:417.5px;width:74.5px;height:15px;border-color:#6a6a6a"></div>
<div class="t" style="left:933px;top:421px;font-size:8px;color:#e4e4e4;-webkit-text-stroke:0.2px #e4e4e4">Preferences</div>

<!-- ===== TECHPACKER PANEL ===== -->
<div class="a" style="left:578px;top:85px;width:297px;height:476px;background:#3d3d3d;border-radius:3px 3px 0 0;box-shadow:0 2px 6px rgba(0,0,0,0.3)"></div>
<div class="a" style="left:578px;top:95px;width:297px;height:21px;background:#434343"></div>
<div class="a" style="left:578px;top:95px;width:57px;height:21px;background:#535353"></div>
<div class="t" style="left:582.5px;top:86.5px;font-size:7.5px;color:#a8a8a8">&#x2715;</div>
<div class="t" style="left:585px;top:101px;font-size:8px;font-weight:bold;color:#e8e8e8">Techpacker</div>
<div class="a" style="left:578px;top:116px;width:297px;height:392px;background:#f7f7f7"></div>
<div class="a" style="left:863px;top:116px;width:12px;height:392px;background:#fbfbfb"></div>
<div class="a" style="left:578px;top:116px;width:1px;height:392px;background:#d6d6d6"></div>
<div class="a" style="left:578px;top:116px;width:285px;height:42px;background:#02272f"></div>
<div class="a" style="left:578px;top:158px;width:285px;height:32.5px;background:#01323d"></div>
<svg style="left:600px;top:130px" width="15" height="13" viewBox="0 0 15 13"><path d="M14 6.5 L1.5 6.5 M7 1 L1.5 6.5 L7 12" fill="none" stroke="#fff" stroke-width="1.7"/></svg>
<div class="t" style="left:626px;top:122px;font-size:14px;font-weight:bold;color:#fff;line-height:16px">Cards - Leather<br>handbag</div>
<svg style="left:752px;top:131px" width="15" height="11" viewBox="0 0 15 11"><path d="M0 1 L14 1 M0 5.5 L10 5.5 M0 10 L6 10" stroke="#fff" stroke-width="1.6"/></svg>
<div class="a" style="left:778px;top:125px;width:74px;height:23.5px;background:#fff;border-radius:3px"></div>
<svg style="left:792px;top:129px" width="14" height="14" viewBox="0 0 14 14"><circle cx="5.5" cy="5.5" r="4.2" fill="none" stroke="#111" stroke-width="1.6"/><path d="M8.6 8.6 L12.8 12.8" stroke="#111" stroke-width="1.8"/></svg>
<div class="t" style="left:811px;top:132px;font-size:10.7px;color:#9a9a9a">Search</div>
<div class="a" style="left:783px;top:162px;width:68.5px;height:25px;background:#1b4a51"></div>
<div class="t" style="left:795px;top:171.5px;font-size:8.7px;font-weight:bold;color:#8da6a9">DOC VIEW</div>

<!-- sketches -->
<div class="a" style="left:579px;top:197px;width:285px;height:40.5px;background:#f0ece6"></div>
<svg style="left:596px;top:214.5px" width="11" height="8" viewBox="0 0 11 8"><path d="M1 1.5 L5.5 6 L10 1.5" fill="none" stroke="#1c1c1c" stroke-width="1.5"/></svg>
<svg style="left:631px;top:208px" width="20" height="20" viewBox="0 0 20 20"><path d="M2 18 L3.2 13 L14 2.2 C15 1.2, 16.3 1.2, 17.3 2.2 L17.8 2.7 C18.8 3.7, 18.8 5, 17.8 6 L7 16.8 Z M3.2 13 L7 16.8 M12.2 4 L16 7.8 M2 18 L3 14.5 L5.5 17 Z" fill="none" stroke="#1c1c1c" stroke-width="1.3" stroke-linejoin="round"/><path d="M2 18 L2.6 15.5 L4.5 17.4 Z" fill="#1c1c1c"/></svg>
<div class="t" style="left:661px;top:211px;font-size:16px;color:#1e1e1e">Sketches</div>
<div class="a" style="left:829px;top:206px;width:23px;height:23px;background:#dcd9d3"></div>
<svg style="left:834px;top:211px" width="13" height="13" viewBox="0 0 13 13"><path d="M6.5 1 L6.5 12 M1 6.5 L12 6.5" stroke="#111" stroke-width="1.6"/></svg>

<!-- table -->
<div class="a" style="left:587.5px;top:247px;width:267px;height:62.5px;border:1px solid #d2d2d2;background:#f9f9f9"></div>
<div class="a" style="left:588px;top:267.5px;width:266px;height:1px;background:#d2d2d2"></div>
<div class="a" style="left:588px;top:288px;width:266px;height:1px;background:#d2d2d2"></div>
<div class="a" style="left:667px;top:247px;width:1px;height:62px;background:#d2d2d2"></div>
<div class="t" style="left:681px;top:252px;font-size:12.8px;color:#2a2a2a">Front view</div>
<div class="t" style="left:681px;top:273px;font-size:12.8px;color:#2a2a2a">Side view</div>
<div class="t" style="left:681px;top:293.5px;font-size:12.8px;color:#2a2a2a">New card...</div>
<svg style="left:603px;top:248px" width="20" height="60" viewBox="0 0 20 60">
<rect x="0" y="0" width="19" height="18.5" fill="#fdfdfd"/>
<path d="M3 9.5 C 4 4, 7 1.5, 10 1.5 C 13 1.5, 16 4, 17 9.5" fill="none" stroke="#d9a066" stroke-width="0.9"/>
<path d="M2.5 9.5 L17.5 9.5 L17 16 C 17 17, 16 17.5, 15 17.5 L5 17.5 C 4 17.5, 3 17, 3 16 Z" fill="#e38f00"/>
<rect x="0" y="21" width="19" height="18" fill="#fdfdfd"/>
<path d="M4 35 C 5 28, 8 21.5, 10.5 21.5 C 13 21.5, 15 28, 17 33" fill="none" stroke="#d98a20" stroke-width="1.4"/>
<path d="M4 31 L16 29 L17 35 C 17 37, 16 37.5, 15 37.5 L6 38 C 4.5 38, 3.5 37, 3.5 36 Z" fill="#e38f00"/>
<path d="M2.5 44 L13 44 M2.5 44 L2.5 58 L16.5 58 L16.5 49" fill="none" stroke="#1c1c1c" stroke-width="1.6" stroke-linejoin="round"/>
<path d="M5 56 L8 52.5 L10 54.5 L12 52 L14.5 56 Z" fill="#1c1c1c"/>
<path d="M16 41 L16 48 M12.5 44.5 L19.5 44.5" stroke="#1c1c1c" stroke-width="1.6"/>
</svg>

<!-- materials & measurements -->
<div class="a" style="left:579px;top:318.5px;width:285px;height:81px;background:#f0ece6"></div>
<svg style="left:599px;top:332px" width="9" height="12" viewBox="0 0 9 12"><path d="M2 1.5 L6.5 6 L2 10.5" fill="none" stroke="#1c1c1c" stroke-width="1.5"/></svg>
<svg style="left:599px;top:373px" width="9" height="12" viewBox="0 0 9 12"><path d="M2 1.5 L6.5 6 L2 10.5" fill="none" stroke="#1c1c1c" stroke-width="1.5"/></svg>
<svg style="left:630px;top:329px" width="20" height="20" viewBox="0 0 20 20"><path d="M10 1.5 L17.5 5.5 L17.5 14 L10 18.3 L2.5 14 L2.5 5.5 Z M2.5 5.5 L10 9.7 L17.5 5.5 M10 9.7 L10 18.3" fill="none" stroke="#1c1c1c" stroke-width="1.4" stroke-linejoin="round"/></svg>
<div class="t" style="left:660px;top:331.5px;font-size:16px;color:#1e1e1e">Materials</div>
<svg style="left:630px;top:370px" width="20" height="20" viewBox="0 0 20 20"><path d="M18.5 1.5 L18.5 18.5 L1.5 18.5 Z M14.5 9.5 L14.5 15 L9 15 Z" fill="none" stroke="#1c1c1c" stroke-width="1.3" stroke-linejoin="round"/><path d="M5 18 L5 16.8 M8 18 L8 16 M11 18 L11 16.8 M14 18 L14 16 M18 5 L16.8 5 M18 8 L16 8 M18 11 L16.8 11" stroke="#1c1c1c" stroke-width="0.8"/></svg>
<div class="t" style="left:661px;top:372px;font-size:16px;color:#1e1e1e;letter-spacing:0.1px">Measurements</div>
<div class="a" style="left:829px;top:327.5px;width:23px;height:22.5px;background:#dcd9d3"></div>
<svg style="left:834px;top:332px" width="13" height="13" viewBox="0 0 13 13"><path d="M6.5 1 L6.5 12 M1 6.5 L12 6.5" stroke="#111" stroke-width="1.6"/></svg>
<div class="a" style="left:829px;top:368px;width:23px;height:22.5px;background:#dcd9d3"></div>
<svg style="left:834px;top:373px" width="13" height="13" viewBox="0 0 13 13"><path d="M6.5 1 L6.5 12 M1 6.5 L12 6.5" stroke="#111" stroke-width="1.6"/></svg>

<!-- footer -->
<div class="a" style="left:578px;top:508px;width:297px;height:53px;background:#022730"></div>
<div class="a" style="left:578px;top:559px;width:96px;height:2px;background:#1fd1a1"></div>
<svg style="left:618px;top:517px" width="17" height="14" viewBox="0 0 17 14"><path d="M1.5 1.5 C1.5 1, 2 0.5, 2.5 0.5 L6.5 0.5 L8 2.2 L14.5 2.2 C15.2 2.2, 15.7 2.7, 15.7 3.4 L15.7 12.3 C15.7 13, 15.2 13.5, 14.5 13.5 L2.5 13.5 C2 13.5, 1.5 13, 1.5 12.3 Z" fill="#fff"/></svg>
<div class="t" style="left:608.5px;top:538.5px;font-size:8.6px;font-weight:bold;color:#fff">FOLDER</div>
<svg style="left:719px;top:517px" width="16" height="15" viewBox="0 0 16 15"><rect x="0.5" y="1.5" width="6.3" height="6" fill="#b9c4c6"/><rect x="0.5" y="8.5" width="6.3" height="6" fill="#b9c4c6"/><rect x="7.8" y="8.5" width="6.3" height="6" fill="#b9c4c6"/><path d="M11 0.5 L14.8 4.3 L11 8 L7.2 4.3 Z" fill="#b9c4c6"/></svg>
<div class="t" style="left:703px;top:538.5px;font-size:8.6px;font-weight:bold;color:#b9c4c6">LIBRARIES</div>
<svg style="left:819px;top:516px" width="16" height="17" viewBox="0 0 16 17"><path d="M3 10 A5.3 5.3 0 0 1 11.5 3.8 M13 7 A5.3 5.3 0 0 1 4.5 13.2" fill="none" stroke="#b9c4c6" stroke-width="1.8"/><path d="M10 1 L13.5 4.5 L9 5.5 Z M6 16 L2.5 12.5 L7 11.5 Z" fill="#b9c4c6"/></svg>
<div class="t" style="left:809px;top:538.5px;font-size:8.6px;font-weight:bold;color:#b9c4c6">RECENT</div>

<svg style="left:4px;top:52px" width="7" height="5" viewBox="0 0 7 5"><path d="M2.8 0.8 L1 2.5 L2.8 4.2 M5.8 0.8 L4 2.5 L5.8 4.2" fill="none" stroke="#aaa" stroke-width="0.75"/></svg><svg style="left:803px;top:52px" width="7" height="5" viewBox="0 0 7 5"><path d="M2.8 0.8 L1 2.5 L2.8 4.2 M5.8 0.8 L4 2.5 L5.8 4.2" fill="none" stroke="#aaa" stroke-width="0.75"/></svg><svg style="left:990px;top:52px" width="7" height="5" viewBox="0 0 7 5"><path d="M1.2 0.8 L3 2.5 L1.2 4.2 M4.2 0.8 L6 2.5 L4.2 4.2" fill="none" stroke="#aaa" stroke-width="0.75"/></svg><svg style="left:864px;top:88.5px" width="7" height="5" viewBox="0 0 7 5"><path d="M2.8 0.8 L1 2.5 L2.8 4.2 M5.8 0.8 L4 2.5 L5.8 4.2" fill="none" stroke="#aaa" stroke-width="0.75"/></svg>
</body></html>
